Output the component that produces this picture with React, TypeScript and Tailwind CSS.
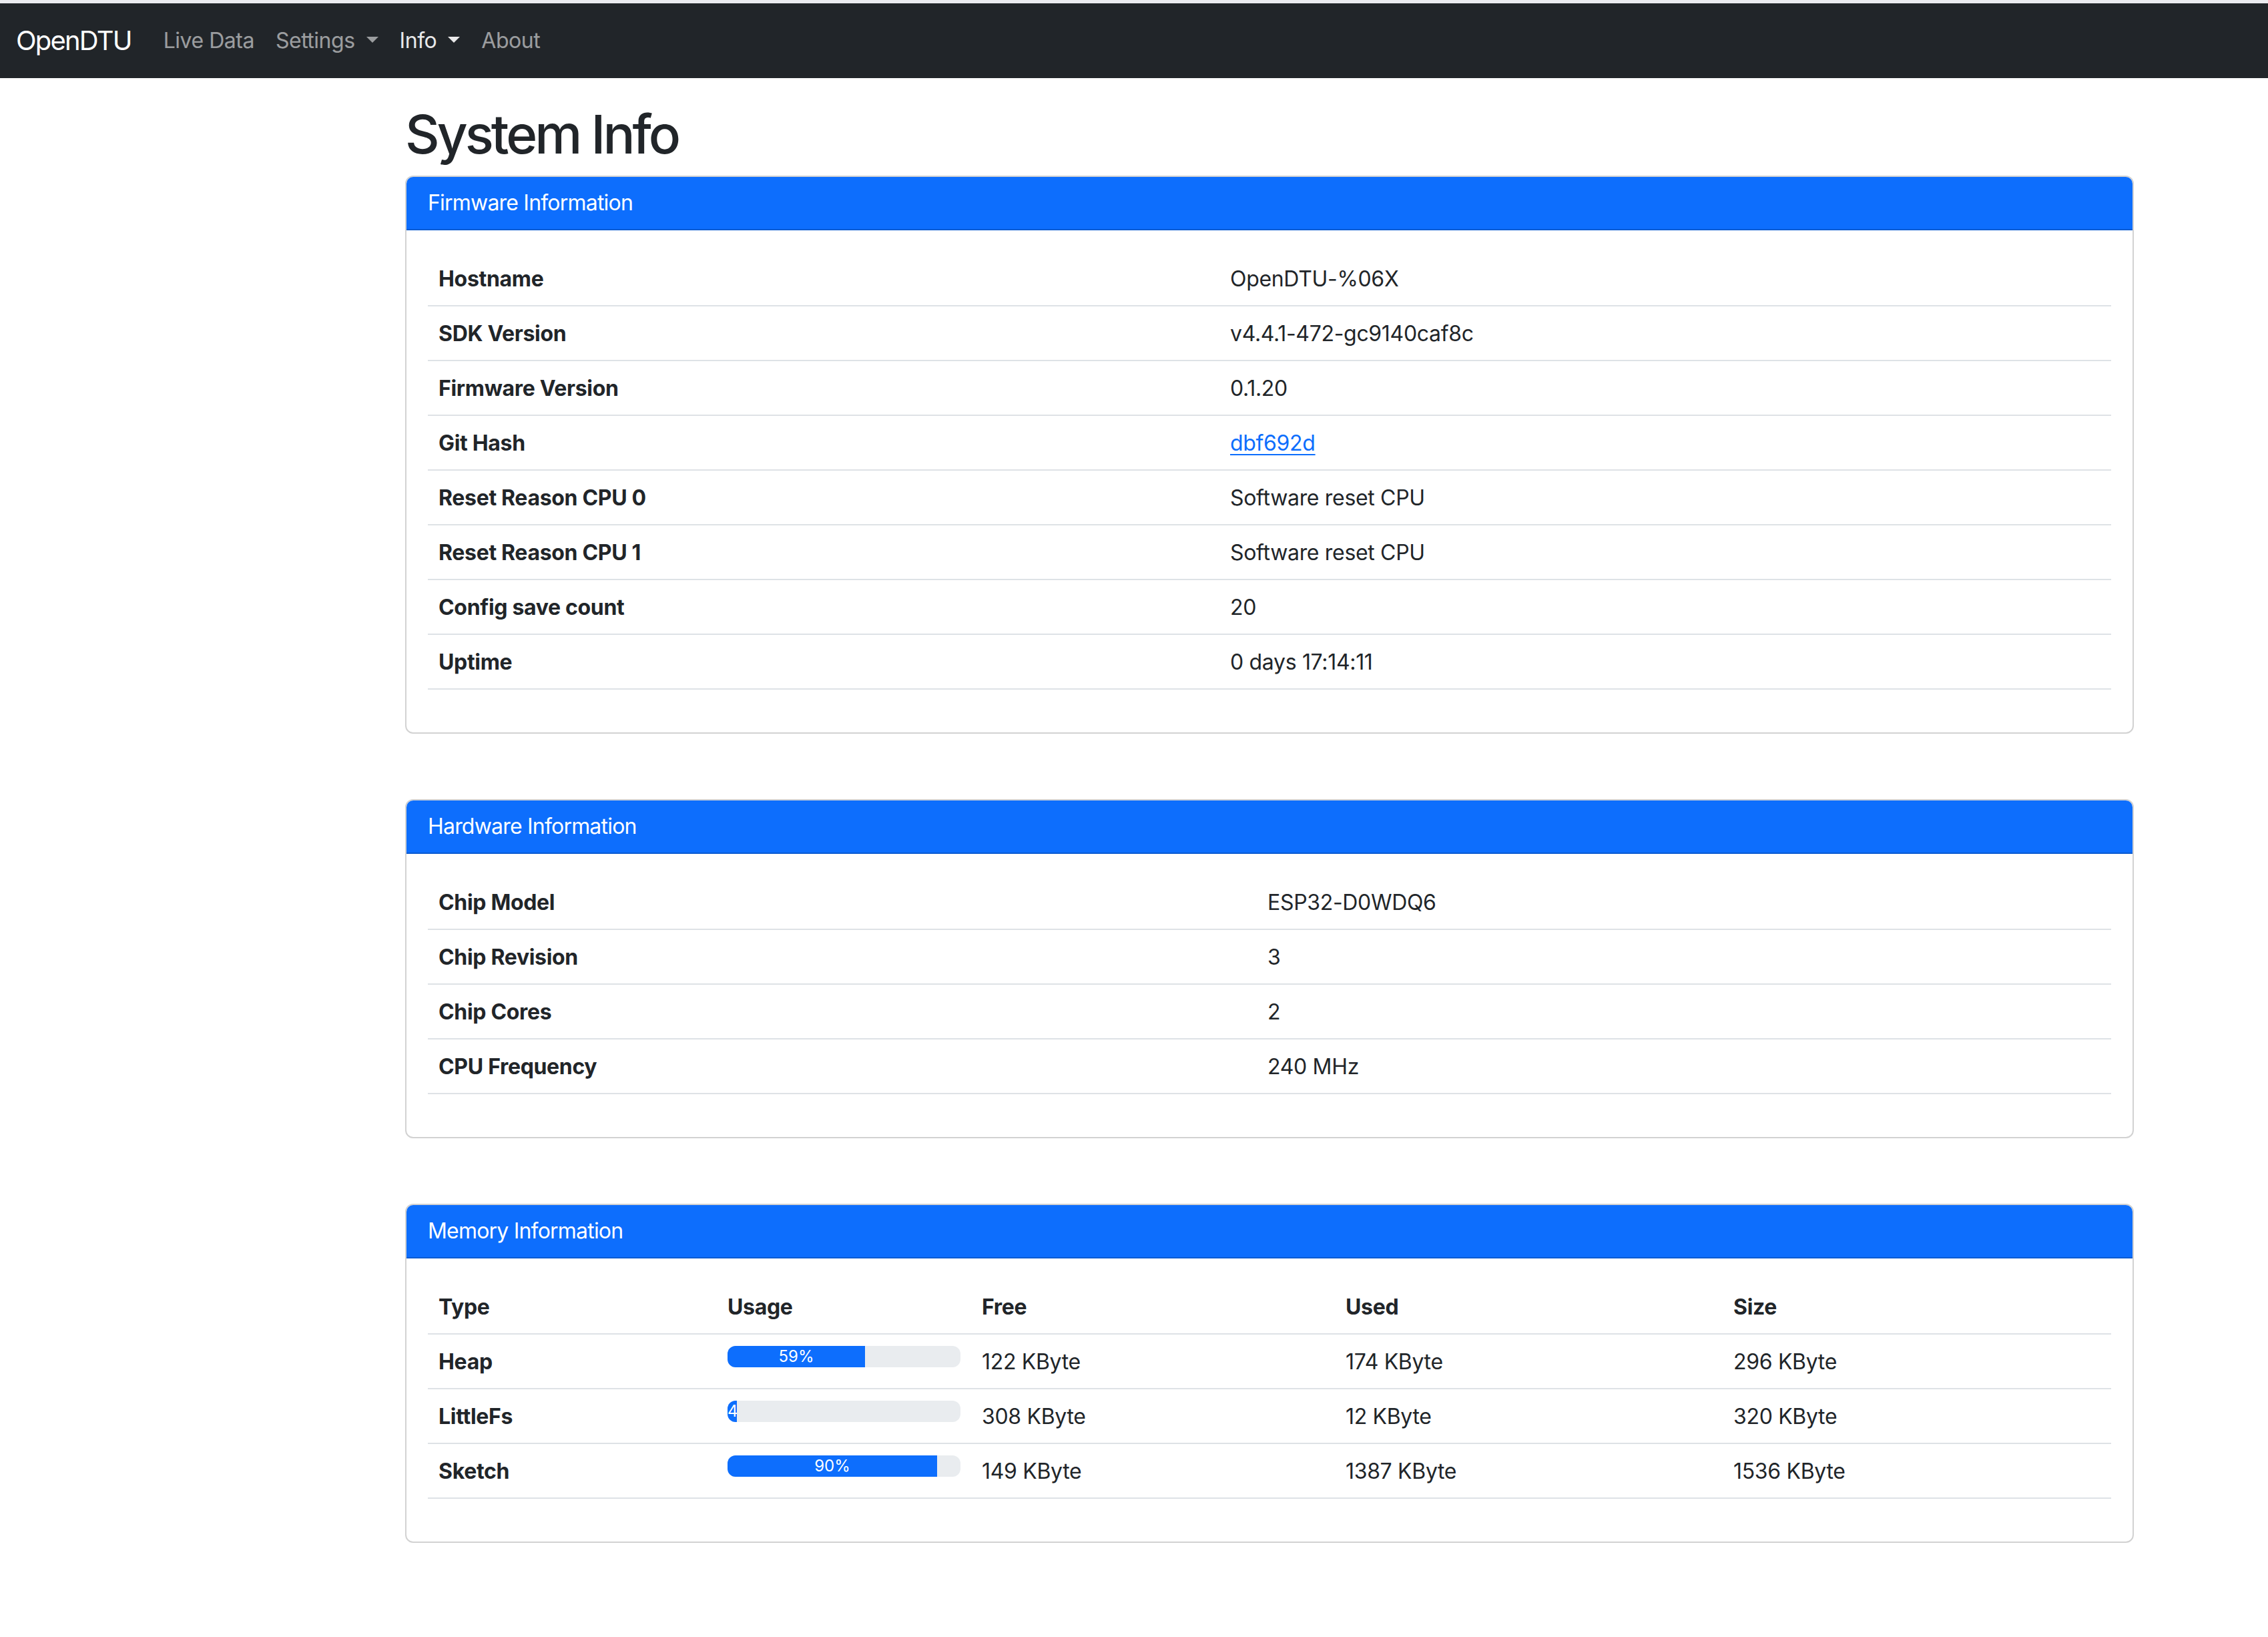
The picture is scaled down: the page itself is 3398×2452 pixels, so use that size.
import type { ReactNode } from "react";

const firmware: [string, ReactNode][] = [
  ["Hostname", "OpenDTU-%06X"],
  ["SDK Version", "v4.4.1-472-gc9140caf8c"],
  ["Firmware Version", "0.1.20"],
  [
    "Git Hash",
    <a href="#" className="text-[#0d6efd] underline decoration-2 underline-offset-[5px]">
      dbf692d
    </a>,
  ],
  ["Reset Reason CPU 0", "Software reset CPU"],
  ["Reset Reason CPU 1", "Software reset CPU"],
  ["Config save count", "20"],
  ["Uptime", "0 days 17:14:11"],
];

const hardware: [string, string][] = [
  ["Chip Model", "ESP32-D0WDQ6"],
  ["Chip Revision", "3"],
  ["Chip Cores", "2"],
  ["CPU Frequency", "240 MHz"],
];

const memory = [
  { type: "Heap", pct: 59, free: "122 KByte", used: "174 KByte", size: "296 KByte" },
  { type: "LittleFs", pct: 4, free: "308 KByte", used: "12 KByte", size: "320 KByte" },
  { type: "Sketch", pct: 90, free: "149 KByte", used: "1387 KByte", size: "1536 KByte" },
];

const cell =
  "px-[16px] pt-[17px] pb-[15px] text-[32px] leading-[48px] tracking-[-0.01em] border-b-2 border-[#dee2e6] text-left align-top";

function Caret() {
  return (
    <span className="inline-block ml-[17px] align-[8px] w-0 h-0 border-t-[9px] border-t-current border-x-[9px] border-x-transparent" />
  );
}

function Card({ title, className, children }: { title: string; className?: string; children: ReactNode }) {
  return (
    <div className={`rounded-[12px] border-2 border-[#d2d2d2] bg-white ${className ?? ""}`}>
      <div className="rounded-t-[10px] bg-[#0d6efd] px-[32px] py-[15px] text-[32px] leading-[48px] tracking-[-0.025em] text-white border-b-2 border-[#0b5bd1]">
        {title}
      </div>
      <div className="p-[32px]">{children}</div>
    </div>
  );
}

function KeyValueTable({ rows, labelWidth }: { rows: [string, ReactNode][]; labelWidth: string }) {
  return (
    <table className="w-full table-fixed border-collapse mb-[32px]">
      <colgroup>
        <col className={labelWidth} />
        <col />
      </colgroup>
      <tbody>
        {rows.map(([k, v]) => (
          <tr key={k}>
            <th scope="row" className={`${cell} font-bold`}>
              {k}
            </th>
            <td className={cell}>{v}</td>
          </tr>
        ))}
      </tbody>
    </table>
  );
}

function Progress({ pct }: { pct: number }) {
  return (
    <div className="flex h-[32px] overflow-hidden rounded-[12px] bg-[#e9ecef]">
      <div
        className="overflow-hidden whitespace-nowrap bg-[#0d6efd] text-center text-[24px] leading-[32px] tracking-normal text-white"
        style={{ width: `${pct}%` }}
      >
        {pct}%
      </div>
    </div>
  );
}

export default function App() {
  return (
    <div className="min-h-[2452px] bg-white font-[family-name:Inter,sans-serif] text-[#212529]">
      <div className="h-[5px] bg-[#ebebef]" />
      <nav className="flex h-[112px] items-center bg-[#212529] px-[24px]">
        <a href="#" className="mr-[32px] py-[10px] text-[40px] leading-[60px] tracking-[-0.045em] text-white">
          OpenDTU
        </a>
        <div className="flex items-center text-[32px] leading-[48px] tracking-[-0.015em]">
          <a href="#" className="px-[16px] py-[16px] text-white/55">
            Live Data
          </a>
          <a href="#" className="px-[16px] py-[16px] text-white/55">
            Settings
            <Caret />
          </a>
          <a href="#" className="px-[16px] py-[16px] text-white/90">
            Info
            <Caret />
          </a>
          <a href="#" className="px-[16px] py-[16px] text-white/55">
            About
          </a>
        </div>
      </nav>

      <main className="pl-[607px] pr-[201px] pt-[36px]">
        <h1 className="mb-[14px] text-[80px] font-medium leading-[96px] tracking-[-0.05em]">System Info</h1>

        <Card title="Firmware Information">
          <KeyValueTable rows={firmware} labelWidth="w-[1186px]" />
        </Card>

        <Card title="Hardware Information" className="mt-[98px]">
          <KeyValueTable rows={hardware} labelWidth="w-[1242px]" />
        </Card>

        <Card title="Memory Information" className="mt-[98px]">
          <table className="w-full table-fixed border-collapse mb-[32px]">
            <colgroup>
              <col className="w-[433px]" />
              <col className="w-[381px]" />
              <col className="w-[545px]" />
              <col className="w-[581px]" />
              <col />
            </colgroup>
            <thead>
              <tr>
                {["Type", "Usage", "Free", "Used", "Size"].map((h) => (
                  <th key={h} className={`${cell} font-bold`}>
                    {h}
                  </th>
                ))}
              </tr>
            </thead>
            <tbody>
              {memory.map((m) => (
                <tr key={m.type}>
                  <th scope="row" className={`${cell} font-bold`}>
                    {m.type}
                  </th>
                  <td className={cell}>
                    <Progress pct={m.pct} />
                  </td>
                  <td className={cell}>{m.free}</td>
                  <td className={cell}>{m.used}</td>
                  <td className={cell}>{m.size}</td>
                </tr>
              ))}
            </tbody>
          </table>
        </Card>
      </main>
    </div>
  );
}
